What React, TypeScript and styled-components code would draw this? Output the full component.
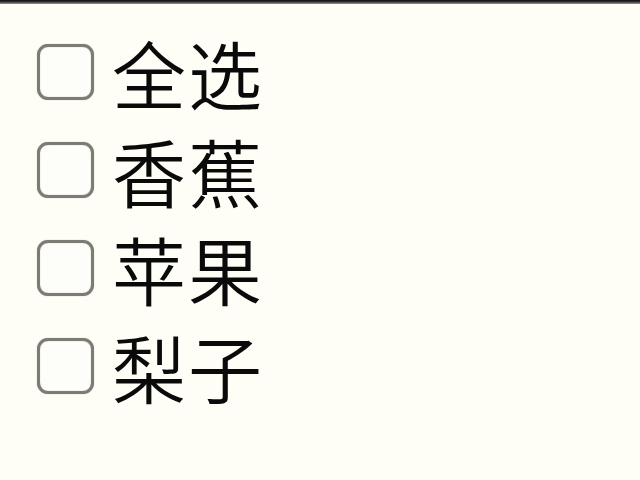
import React from "react"
import styled, { createGlobalStyle } from "styled-components"

const GlobalStyle = createGlobalStyle`
    html, body {
        margin: 0;
        padding: 0;
        background: #fefef6;
    }
    body {
        font-family: "Noto Sans CJK SC", "Noto Sans", sans-serif;
    }
`

const Page = styled.div`
    width: 640px;
    height: 480px;
    background: #fefef6;
    overflow: hidden;
`

const TopBar = styled.div`
    height: 4px;
    background: linear-gradient(#0c0c0c, #3a3a3a 50%, #9a9a9a);
`

const List = styled.div`
    display: flex;
    flex-direction: column;
    padding: 19px 0 0 37px;
`

const Row = styled.label`
    display: flex;
    align-items: center;
    height: 98px;
    gap: 18px;
`

const Box = styled.span`
    box-sizing: border-box;
    width: 57px;
    height: 56px;
    border: 3.5px solid #7c7c74;
    border-radius: 11px;
    background: #fdfdfa;
    box-shadow: 0 0 1px #9a9a90, inset 0 0 1px #9a9a90;
`

const Label = styled.span`
    font-size: 74px;
    font-weight: 350;
    line-height: 1;
    color: #0a0a0a;
    letter-spacing: 2px;
`

const items = ["全选", "香蕉", "苹果", "梨子"]

export default function App() {
    return (
        <Page>
            <GlobalStyle />
            <TopBar />
            <List>
                {items.map((name) => (
                    <Row key={name}>
                        <Box />
                        <Label>{name}</Label>
                    </Row>
                ))}
            </List>
        </Page>
    )
}
